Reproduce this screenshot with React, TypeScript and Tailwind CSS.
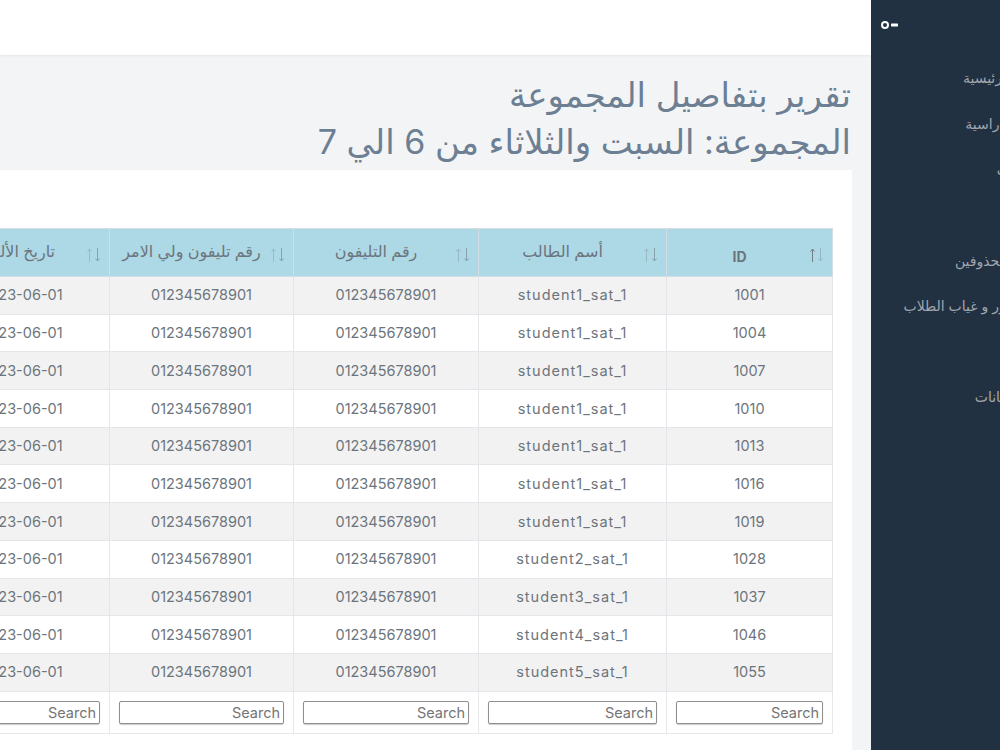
const FONT = "font-['Inter','Noto_Sans','DejaVu_Sans',sans-serif]";

const rows = [
  ["1001", "student1_sat_1"],
  ["1004", "student1_sat_1"],
  ["1007", "student1_sat_1"],
  ["1010", "student1_sat_1"],
  ["1013", "student1_sat_1"],
  ["1016", "student1_sat_1"],
  ["1019", "student1_sat_1"],
  ["1028", "student2_sat_1"],
  ["1037", "student3_sat_1"],
  ["1046", "student4_sat_1"],
  ["1055", "student5_sat_1"],
];

const navItems = [
  { label: "الصفحة الرئيسية", h: "h-[46px]", m: "-mr-[59px]" },
  { label: "المراحل الدراسية", h: "h-[46px]", m: "-mr-[66px]" },
  { label: "الطلاب", h: "h-[91px]", m: "-mr-[38px]" },
  { label: "الطلاب المحذوفين", h: "h-[45px]", m: "-mr-[61px]" },
  { label: "حضور و غياب الطلاب", h: "h-[91px]", m: "-mr-[27px]" },
  { label: "الامتحانات", h: "h-[45px]", m: "-mr-[33px]" },
];

function SortArrows({ active }: { active?: boolean }) {
  return (
    <svg width="13" height="14" viewBox="0 0 13 14" className="absolute right-[9px] top-[19px]" fill="none" stroke="#6c757d" strokeWidth="1">
      <g opacity={active ? 0.9 : 0.3}>
        <path d="M2.5 14V1" />
        <path d="M0.5 3.5 L2.5 1 L4.5 3.5" />
      </g>
      <g opacity={active ? 0.35 : 0.55}>
        <path d="M10.5 0V13" />
        <path d="M8.5 10.5 L10.5 13 L12.5 10.5" />
      </g>
    </svg>
  );
}

function Th({ label, active, latin }: { label: string; active?: boolean; latin?: boolean }) {
  return (
    <th className={`relative border border-[#d3dde3] bg-[#add8e6] pl-[10px] pr-[30px] text-center font-medium text-[#6c757d] ${latin ? "text-[14px]" : "text-[16px]"}`}>
      <span className={latin ? "relative top-[4px] font-bold" : "relative -top-[2px]"}>{label}</span>
      <SortArrows active={active} />
    </th>
  );
}

function SearchCell() {
  return (
    <td className="border border-[#e6e9ec] px-[9px] py-0">
      <input
        placeholder="Search"
        className="h-[23px] w-full rounded-[2px] border border-[#8f8f8f] bg-white px-[3px] text-[14.5px] text-[#757575] shadow-[0_1px_1px_rgba(0,0,0,0.2)] placeholder:text-[#757575]"
      />
    </td>
  );
}

export default function App() {
  return (
    <div dir="rtl" className={`flex h-[750px] w-[1000px] overflow-hidden bg-[#f3f4f6] ${FONT}`}>
      <aside className="h-full w-[129px] shrink-0 overflow-hidden bg-[#223142]">
        <div dir="ltr" className="w-[129px] pl-[10px] pt-[20px]">
          <svg width="17" height="10" viewBox="0 0 17 10" className="block">
            <circle cx="4" cy="5" r="3" fill="none" stroke="#ffffff" strokeWidth="2" />
            <rect x="10" y="3.6" width="7" height="2.8" rx="0.6" fill="#ffffff" />
          </svg>
        </div>
        <nav className="mt-[38px] w-[129px]">
          {navItems.map((item) => (
            <div key={item.label} className={`${item.h} whitespace-nowrap text-[14px] leading-[20px] text-[#a0a6ad]`}>
              <span className={`${item.m} block`}>{item.label}</span>
            </div>
          ))}
        </nav>
      </aside>

      <main className="h-full min-w-0 flex-1">
        <header className="h-[55px] bg-white shadow-[0_1px_2px_rgba(0,0,0,0.06)]" />
        <div className="pr-[19px]">
          <h1 className="h-[115px] pt-[16px] pr-[1px] text-[34px] leading-[47px] font-normal whitespace-nowrap text-[#6c7f93]">
            <div>تقرير بتفاصيل المجموعة</div>
            <div>المجموعة: السبت والثلاثاء من 6 الي 7</div>
          </h1>
          <section className="h-[580px] bg-white pt-[58px] pr-[19px]">
            <table className="w-[899px] table-fixed border-collapse text-[14.5px] text-[#6c757d]">
              <colgroup>
                <col className="w-[166px]" />
                <col className="w-[188px]" />
                <col className="w-[185px]" />
                <col className="w-[184px]" />
                <col className="w-[176px]" />
              </colgroup>
              <thead>
                <tr className="h-[48px]">
                  <Th label="ID" active latin />
                  <Th label="أسم الطالب" />
                  <Th label="رقم التليفون" />
                  <Th label="رقم تليفون ولي الامر" />
                  <Th label="تاريخ الألتحاق" />
                </tr>
              </thead>
              <tbody>
                {rows.map(([id, name], i) => (
                  <tr key={id} className={`h-[37.7px] ${i % 2 === 0 ? "bg-[#f2f2f2]" : "bg-white"}`}>
                    <td className="border border-[#e3e6ea] text-center">{id}</td>
                    <td className="border border-[#e3e6ea] text-center tracking-[1px]">{name}</td>
                    <td className="border border-[#e3e6ea] text-center">012345678901</td>
                    <td className="border border-[#e3e6ea] text-center">012345678901</td>
                    <td className="border border-[#e3e6ea] text-center"><span dir="ltr">2023-06-01</span></td>
                  </tr>
                ))}
                <tr className="h-[42px]">
                  <SearchCell />
                  <SearchCell />
                  <SearchCell />
                  <SearchCell />
                  <SearchCell />
                </tr>
              </tbody>
            </table>
          </section>
        </div>
      </main>
    </div>
  );
}
